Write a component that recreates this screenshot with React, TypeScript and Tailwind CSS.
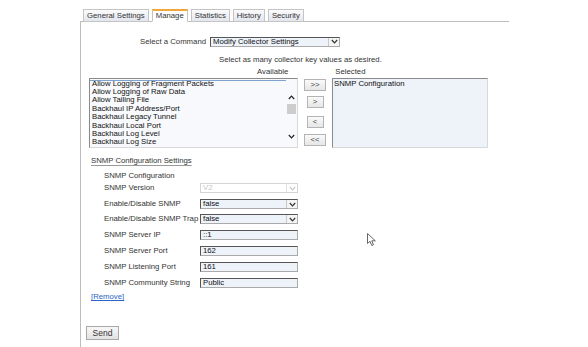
import React from "react";

const tabs = ["General Settings", "Manage", "Statistics", "History", "Security"];

const available = [
  "Allow Logging of Fragment Packets",
  "Allow Logging of Raw Data",
  "Allow Tailing File",
  "Backhaul IP Address/Port",
  "Backhaul Legacy Tunnel",
  "Backhaul Local Port",
  "Backhaul Log Level",
  "Backhaul Log Size",
];

function Chevron({ className = "" }: { className?: string }) {
  return (
    <svg width="7" height="5" viewBox="0 0 7 5" className={className}>
      <path d="M0.8 1 L3.5 3.8 L6.2 1" fill="none" stroke="currentColor" strokeWidth="1.2" />
    </svg>
  );
}

function SelectBox({ value, disabled = false, width }: { value: string; disabled?: boolean; width: string }) {
  return (
    <div
      className={`flex h-[10px] items-center border ${width} ${
        disabled
          ? "border-[#d4d4d4] bg-white text-[#c4c4c4]"
          : "border-t-[#555] border-l-[#555] border-r-[#aaa] border-b-[#aaa] bg-[#eef3fa] text-[#111]"
      }`}
    >
      <span className="flex-1 pl-[2px] leading-[8px]">{value}</span>
      <span
        className={`flex h-full w-[11px] items-center justify-center border-l ${
          disabled ? "border-[#e2e2e2] text-[#c8c8c8]" : "border-[#c8c8c8] bg-[#f4f4f4] text-[#333]"
        }`}
      >
        <Chevron />
      </span>
    </div>
  );
}

function TextBox({ value }: { value: string }) {
  return (
    <div className="flex h-[10px] w-[98px] items-center border border-t-[#555] border-l-[#555] border-r-[#aaa] border-b-[#aaa] bg-[#eef3fa] pl-[2px] leading-[8px] text-[#111]">
      {value}
    </div>
  );
}

function MoveButton({ label, wide = false }: { label: string; wide?: boolean }) {
  return (
    <div
      className={`flex h-[12px] items-center justify-center border border-[#b4b4b4] bg-gradient-to-b from-[#fafafa] to-[#e6e6e6] text-[#444] ${
        wide ? "w-[22px]" : "w-[17px]"
      }`}
    >
      {label}
    </div>
  );
}

const rows: { label: string; kind: "none" | "select" | "disabled" | "text"; value?: string; mt: string }[] = [
  { label: "SNMP Configuration", kind: "none", mt: "mt-[5px]" },
  { label: "SNMP Version", kind: "disabled", value: "V2", mt: "mt-[2px]" },
  { label: "Enable/Disable SNMP", kind: "select", value: "false", mt: "mt-[6px]" },
  { label: "Enable/Disable SNMP Trap", kind: "select", value: "false", mt: "mt-[5px]" },
  { label: "SNMP Server IP", kind: "text", value: "::1", mt: "mt-[6px]" },
  { label: "SNMP Server Port", kind: "text", value: "162", mt: "mt-[6px]" },
  { label: "SNMP Listening Port", kind: "text", value: "161", mt: "mt-[6px]" },
  { label: "SNMP Community String", kind: "text", value: "Public", mt: "mt-[6px]" },
];

export default function App() {
  return (
    <div className="relative h-[347px] w-[588px] overflow-hidden bg-white pl-[80px] pt-[9px] font-['Liberation_Sans',Arial,sans-serif] text-[7.75px] text-[#333]">
      {/* tabs */}
      <div className="flex w-[429px] gap-[3px] border-b border-[#bdbdbd] pl-[3px]">
        {tabs.map((t) => (
          <div
            key={t}
            className={`-mb-px flex h-[13px] items-center px-[3px] leading-none ${
              t === "Manage"
                ? "border border-b-white border-x-[#c4c4c4] border-t-2 border-t-[#f2a73b] bg-white"
                : "border border-[#c4c4c4] bg-gradient-to-b from-[#fbfbfd] to-[#e4e6ee]"
            }`}
          >
            {t}
          </div>
        ))}
      </div>

      {/* body */}
      <div className="h-[330px] border-l border-[#bdbdbd]">
        <div className="flex items-center pt-[14px]">
          <span className="w-[129px] pr-[4px] text-right">Select a Command</span>
          <SelectBox value="Modify Collector Settings" width="w-[130px]" />
        </div>

        <div className="mt-[7px] pl-[138px] leading-[9px]">Select as many collector key values as desired.</div>

        <div className="mt-[3px] flex leading-[9px]">
          <span className="ml-[176px]">Available</span>
          <span className="ml-[47px]">Selected</span>
        </div>

        <div className="mt-[2px] flex items-start pl-[8px]">
          {/* available list */}
          <div className="flex h-[70px] w-[209px] border border-t-[#8a8a8a] border-l-[#8a8a8a] border-r-[#d8d8d8] border-b-[#d8d8d8] bg-[#f7f9fc] text-[#111]">
            <div className="flex-1 pt-[1px]">
              {available.map((a, i) => (
                <div
                  key={a}
                  className={`h-[8.4px] pl-[2px] leading-[8.4px] ${i === 0 ? "shadow-[inset_0_1px_0_#7da2ce]" : ""}`}
                >
                  {a}
                </div>
              ))}
            </div>
            <div className="flex w-[11px] flex-col items-center pt-[16px] text-[#222]">
              <Chevron className="rotate-180" />
              <div className="mt-[4px] h-[10px] w-[9px] bg-[#cdcdcd]" />
              <div className="flex-1" />
              <Chevron className="mb-[8px]" />
            </div>
          </div>

          {/* buttons */}
          <div className="flex w-[34px] flex-col items-center pt-[1px]">
            <MoveButton label=">>" wide />
            <div className="mt-[5px]">
              <MoveButton label=">" />
            </div>
            <div className="mt-[8px]">
              <MoveButton label="<" />
            </div>
            <div className="mt-[6px]">
              <MoveButton label="<<" wide />
            </div>
          </div>

          {/* selected list */}
          <div className="h-[70px] w-[156px] border border-t-[#8a8a8a] border-l-[#8a8a8a] border-r-[#d8d8d8] border-b-[#d8d8d8] bg-[#eef3fa] pl-[1px] pt-[1px] leading-[8.4px] text-[#111]">
            SNMP Configuration
          </div>
        </div>

        <div className="mt-[7px] pl-[10px]">
          <span className="leading-[10px] underline decoration-[#999] underline-offset-2">SNMP Configuration Settings</span>
        </div>

        <div className="pl-[23px]">
          {rows.map((r) => (
            <div key={r.label} className={`flex h-[10px] items-center ${r.mt}`}>
              <span className="w-[96px]">{r.label}</span>
              {r.kind === "select" && <SelectBox value={r.value!} width="w-[98px]" />}
              {r.kind === "disabled" && <SelectBox value={r.value!} disabled width="w-[98px]" />}
              {r.kind === "text" && <TextBox value={r.value!} />}
            </div>
          ))}
        </div>

        <div className="mt-[3px] pl-[10px]">
          <span className="leading-[10px] text-[#2a64c5] underline">[Remove]</span>
        </div>

        <div className="mt-[23px] pl-[5px]">
          <div className="flex h-[14px] w-[33px] items-center justify-center border border-[#a8a8a8] bg-gradient-to-b from-[#f8f8f8] to-[#e2e2e2] text-[8.5px] text-[#333]">
            Send
          </div>
        </div>
      </div>

      {/* mouse pointer */}
      <svg className="absolute left-[367px] top-[233px]" width="10" height="14" viewBox="0 0 10 14">
        <path
          d="M0.5 0.5 L0.5 10.5 L3 8.3 L4.8 12.5 L6.5 11.8 L4.8 7.8 L8.3 7.8 Z"
          fill="#fff"
          stroke="#555"
          strokeWidth="0.9"
          strokeLinejoin="round"
        />
      </svg>
    </div>
  );
}
